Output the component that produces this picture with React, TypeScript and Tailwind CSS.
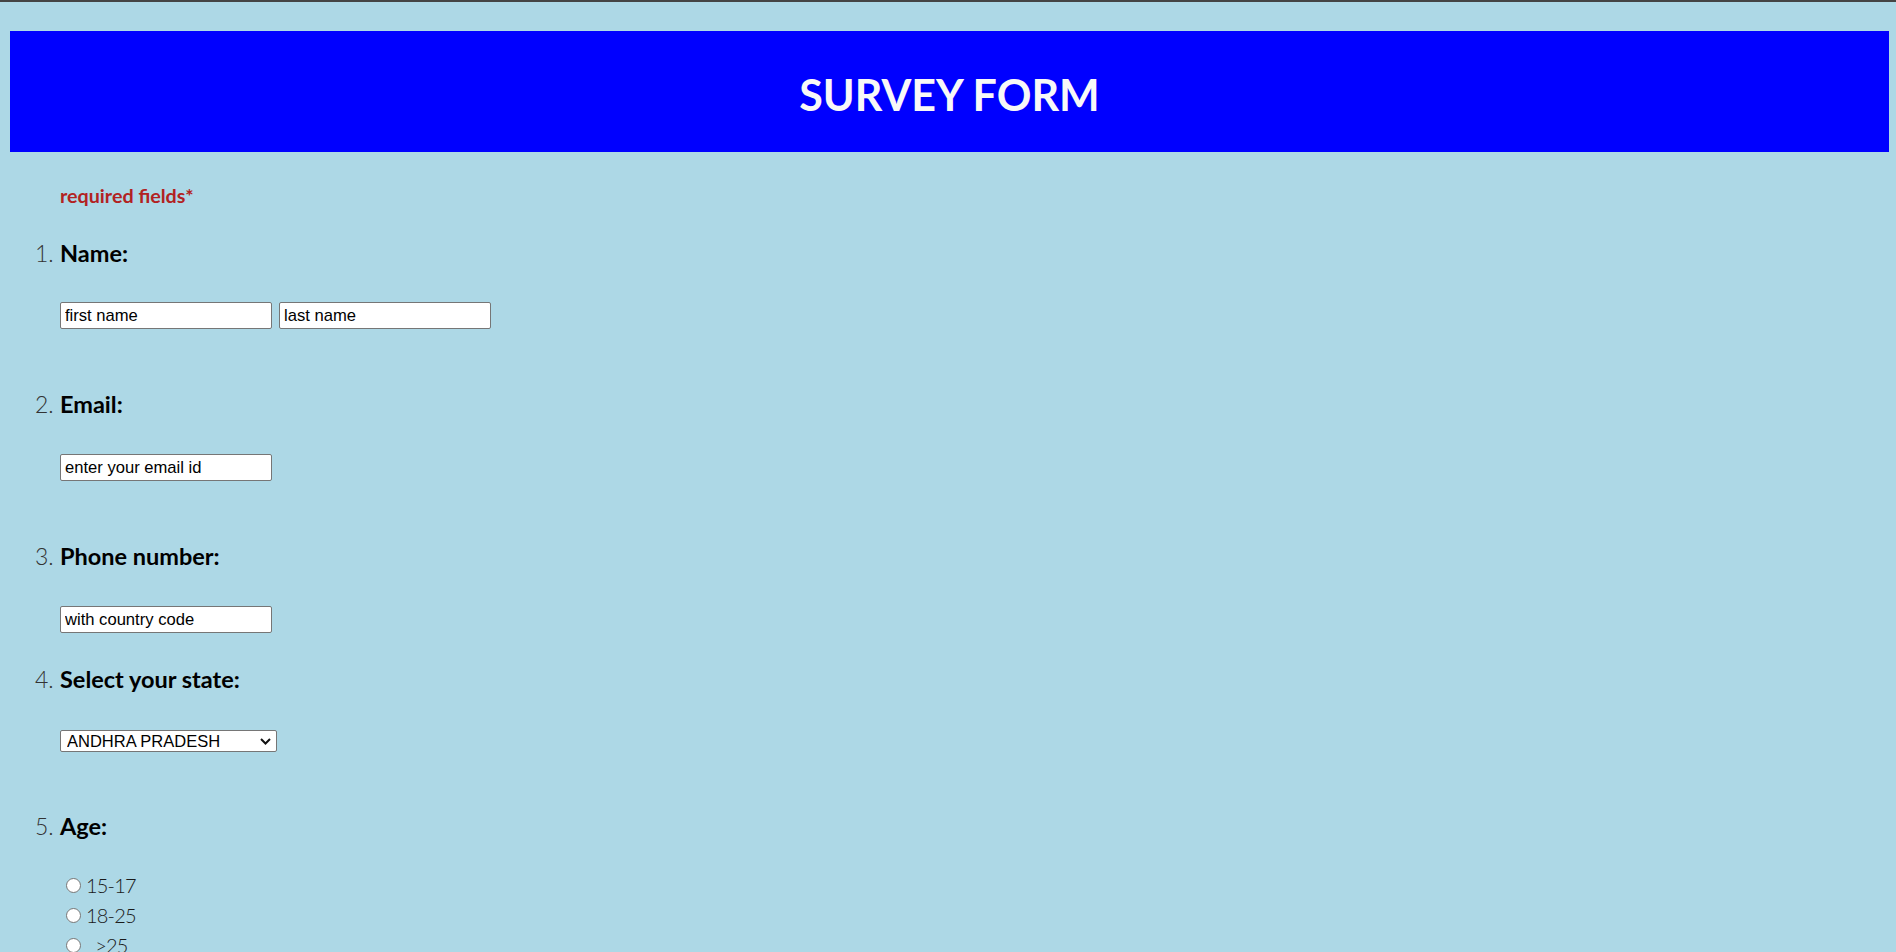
import React from 'react'

const inputCls =
  "h-[27px] w-[212px] border border-[#767676] rounded-[2px] bg-white px-[4px] text-[16.6px] text-black placeholder:text-black font-['Liberation_Sans',Arial,sans-serif] outline-none"

const Heading: React.FC<{ children: React.ReactNode }> = ({ children }) => (
  <h3 className="h-8 leading-8 text-[23.5px] font-bold text-black">{children}</h3>
)

const App: React.FC = () => {
  const ages = ['15-17', '18-25', '\u00a0\u00a0>25']

  return (
    <div className="h-screen overflow-hidden bg-[#add8e6] border-t-2 border-[#444444] font-['Lato','Open_Sans',sans-serif]">
      <header className="mt-[29px] ml-[10px] mr-[7px] h-[121px] pt-[5px] bg-[#0000ff] flex items-center justify-center">
        <h1 className="text-[43px] font-bold text-[#f8f8f8] leading-none">SURVEY FORM</h1>
      </header>

      <p className="mt-[32px] ml-[60px] h-[24px] leading-[24px] text-[19.7px] font-bold text-[#b22222]">
        required fields*
      </p>

      <form>
        <ol className="mt-[29px] pl-[60px] list-decimal font-light text-[23px] leading-8 text-[#222] marker:text-[#333]">
          <li>
            <Heading>Name:</Heading>
            <div className="mt-[33px] flex gap-[7px]">
              <input className={inputCls} placeholder="first name" />
              <input className={inputCls} placeholder="last name" />
            </div>
          </li>

          <li className="mt-[59px]">
            <Heading>Email:</Heading>
            <div className="mt-[34px] flex">
              <input className={`${inputCls} h-[26px]`} placeholder="enter your email id" />
            </div>
          </li>

          <li className="mt-[59px]">
            <Heading>Phone number:</Heading>
            <div className="mt-[34px] flex">
              <input className={`${inputCls} h-[26px]`} placeholder="with country code" />
            </div>
          </li>

          <li className="mt-[30px]">
            <Heading>Select your state:</Heading>
            <div className="mt-[35px] relative flex w-[217px] h-[22px]">
              <select
                defaultValue="ap"
                className="appearance-none h-[22px] w-[217px] border border-[#767676] rounded-[2px] bg-white pl-[6px] py-0 text-[16.5px] leading-[20px] text-black font-['Liberation_Sans',Arial,sans-serif] outline-none"
              >
                <option value="ap">ANDHRA PRADESH</option>
                <option value="ar">ARUNACHAL PRADESH</option>
                <option value="as">ASSAM</option>
                <option value="br">BIHAR</option>
              </select>
              <svg
                className="absolute right-[6px] top-[8px] pointer-events-none"
                width="11"
                height="7"
                viewBox="0 0 11 7"
                fill="none"
              >
                <path d="M1 1l4.5 4.5L10 1" stroke="#111" strokeWidth="2" />
              </svg>
            </div>
          </li>

          <li className="mt-[58px]">
            <Heading>Age:</Heading>
            <div className="mt-[28px]">
              {ages.map(a => (
                <label key={a} className="h-[30px] flex items-center text-[20px] tracking-[-0.8px] text-[#1a1a1a]">
                  <input
                    type="radio"
                    name="age"
                    className="appearance-none ml-[6px] w-[15px] h-[15px] rounded-full border border-[#767676] bg-white"
                  />
                  <span className="ml-[5px]">{a}</span>
                </label>
              ))}
            </div>
          </li>
        </ol>
      </form>
    </div>
  )
}

export default App
